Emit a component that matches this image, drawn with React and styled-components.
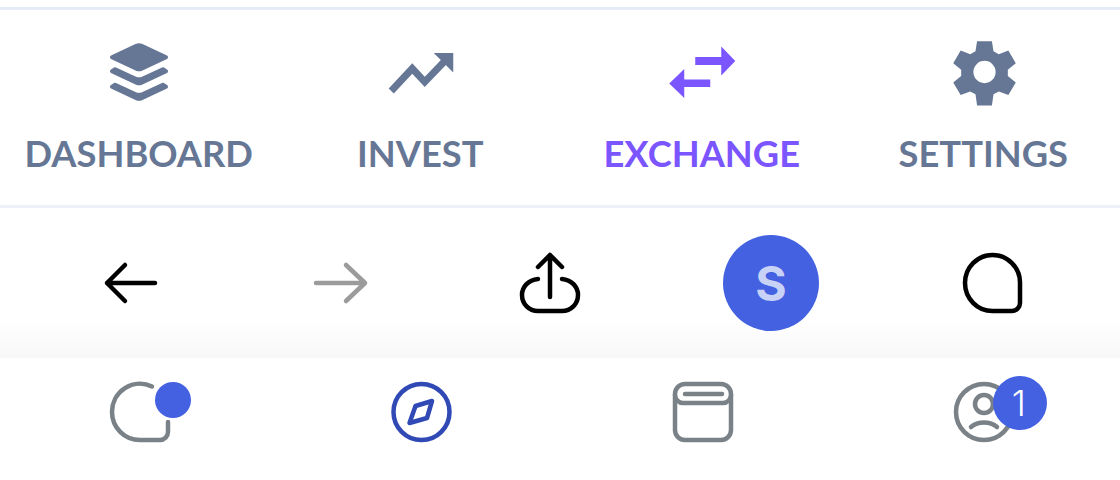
import styled, { createGlobalStyle } from 'styled-components';

const Global = createGlobalStyle`
  html, body { margin: 0; padding: 0; background: #fff; }
  * { box-sizing: border-box; }
`;

const Page = styled.div`
  width: 1120px;
  height: 480px;
  overflow: hidden;
  background: #fff;
  padding-top: 7px;
  display: flex;
  flex-direction: column;
`;

const TopNav = styled.nav`
  height: 201px;
  border-top: 3px solid #e5ebf9;
  border-bottom: 3px solid #edf1f7;
  display: grid;
  grid-template-columns: repeat(4, 281.5px);
  justify-content: center;
  padding-left: 2px;
`;

const NavItem = styled.div`
  display: flex;
  flex-direction: column;
  align-items: center;
  color: ${({ $active }) => ($active ? '#7b55ff' : '#667795')};
`;

const NavIcon = styled.svg`
  width: 80px;
  height: 80px;
  margin-top: 21px;
  fill: currentColor;
  display: block;
`;

const NavLabel = styled.div`
  font-family: Lato, sans-serif;
  font-size: 36.3px;
  font-weight: 700;
  line-height: 44px;
  margin-top: 20px;
`;

const Toolbar = styled.div`
  height: 150px;
  padding-top: 27px;
  display: grid;
  grid-template-columns: 131px 209px 210px 221px 221px;
  background: linear-gradient(to bottom, #fff 0, #fff 112px, #f7f7f7 150px);
`;

const ToolCell = styled.div`
  display: flex;
  justify-content: flex-end;
  width: 100%;
`;

const ToolSlot = styled.div`
  width: 96px;
  height: 96px;
  margin-right: -48px;
  display: flex;
  align-items: center;
  justify-content: center;
`;

const ToolIcon = styled.svg`
  width: 72px;
  height: 72px;
  fill: none;
  stroke: ${({ $muted }) => ($muted ? '#9b9b9b' : '#000')};
  stroke-width: 4.5;
  stroke-linecap: round;
  stroke-linejoin: round;
`;

const Avatar = styled.div`
  width: 96px;
  height: 96px;
  border-radius: 50%;
  background: #4361e1;
  color: #c8d1f6;
  font-family: Inter, sans-serif;
  font-size: 48px;
  font-weight: 700;
  display: flex;
  align-items: center;
  justify-content: center;
`;

const TabBar = styled.div`
  height: 122px;
  display: grid;
  grid-template-columns: repeat(4, 281.5px);
  justify-content: center;
  padding-left: 4px;
  background: #fff;
`;

const Tab = styled.div`
  display: flex;
  justify-content: center;
  padding-top: 18px;
`;

const TabIconWrap = styled.div`
  position: relative;
  width: 72px;
  height: 72px;
`;

const TabIcon = styled.svg`
  width: 72px;
  height: 72px;
  display: block;
  fill: none;
  stroke: ${({ $color }) => $color || '#7a8288'};
  stroke-width: 4.5;
  stroke-linecap: round;
  stroke-linejoin: round;
`;

const Dot = styled.span`
  position: absolute;
  left: 51px;
  top: 6px;
  width: 36px;
  height: 36px;
  border-radius: 50%;
  background: #4361e1;
`;

const Badge = styled.span`
  position: absolute;
  left: 45px;
  top: 0;
  width: 54px;
  height: 54px;
  padding-right: 3px;
  border-radius: 50%;
  background: #4361e1;
  color: #fff;
  font-family: Inter, sans-serif;
  font-size: 36px;
  font-weight: 300;
  display: flex;
  align-items: center;
  justify-content: center;
`;

const wing = 'M17 36.500L36.500 45.500a8 8 0 0 0 7 0L63 36.500a2 2 0 0 1 2 0l3 2a2 2 0 0 1 0 3.500L43.500 53.500a8 8 0 0 1-7 0L12 42a2 2 0 0 1 0-3.500l3-2a2 2 0 0 1 2 0z';

const navItems = [
  {
    label: 'DASHBOARD',
    icon: (
      <>
        <path d="M36.500 13a8 8 0 0 1 7 0L68 24.500a2 2 0 0 1 0 3.500L43.500 39.500a8 8 0 0 1-7 0L12 28a2 2 0 0 1 0-3.500z" />
        <path d={wing} />
        <path d={wing} transform="translate(0 15.500)" />
      </>
    ),
  },
  {
    label: 'INVEST',
    icon: (
      <g transform="translate(0.75 0)">
        <path d="M10.500 60L31.500 37.500 44 51 66 28" fill="none" stroke="currentColor" strokeWidth="7" />
        <path d="M53 22h19.500v19.500z" />
      </g>
    ),
  },
  {
    label: 'EXCHANGE',
    active: true,
    icon: (
      <g transform="translate(1.25 0)">
        <path d="M32 26h26V15.500L72 30 58 44.500V34H32z" />
        <path d="M47 48.500H21V38L6 52.500 21 67V56h26z" />
      </g>
    ),
  },
  {
    label: 'SETTINGS',
    icon: (
      <path
        transform="translate(41.5 41) scale(1.06) translate(-40 -40)"
        fillRule="evenodd"
        d="M33 11h14l1.500 9.500 5 2.800 9-3.500 7 12-7.500 6v6l7.500 6-7 12-9-3.500-5 2.800-1.500 10.400h-14l-1.500-10.400-5-2.800-9 3.500-7-12 7.500-6v-6l-7.500-6 7-12 9 3.500 5-2.800zM40 29.500a10.500 10.500 0 1 0 0 21 10.500 10.500 0 0 0 0-21z"
      />
    ),
  },
];

export default function App() {
  return (
    <Page>
      <Global />
      <TopNav>
        {navItems.map((item) => (
          <NavItem key={item.label} $active={item.active}>
            <NavIcon viewBox="0 0 80 80">{item.icon}</NavIcon>
            <NavLabel>{item.label}</NavLabel>
          </NavItem>
        ))}
      </TopNav>

      <Toolbar>
        <ToolCell>
          <ToolSlot>
            <ToolIcon viewBox="0 0 72 72">
              <path d="M60 36H12M30 18L12 36 30 54" />
            </ToolIcon>
          </ToolSlot>
        </ToolCell>
        <ToolCell>
          <ToolSlot>
            <ToolIcon viewBox="0 0 72 72" $muted>
              <path d="M12 36h49M42 18l19 18-19 18" />
            </ToolIcon>
          </ToolSlot>
        </ToolCell>
        <ToolCell>
          <ToolSlot>
            <ToolIcon viewBox="0 0 72 72">
              <path d="M36 50V8M24 20L36 8 48 20" />
              <path d="M24 32C14 33 8 40 8 48c0 9 7 16 16 16h24c9 0 16-7 16-16 0-8-6-15-16-16" />
            </ToolIcon>
          </ToolSlot>
        </ToolCell>
        <ToolCell>
          <ToolSlot>
            <Avatar>S</Avatar>
          </ToolSlot>
        </ToolCell>
        <ToolCell>
          <ToolSlot>
            <ToolIcon viewBox="0 0 72 72">
              <path d="M36.500 8A27.500 27.500 0 0 1 64 35.500V56a8 8 0 0 1-8 8H36.500A27.500 28 0 0 1 9 36 27.500 28 0 0 1 36.500 8z" />
            </ToolIcon>
          </ToolSlot>
        </ToolCell>
      </Toolbar>

      <TabBar>
        <Tab>
          <TabIconWrap>
            <TabIcon viewBox="0 0 72 72">
              <path d="M48 10.500A28 28 0 0 0 8 36a28 28 0 0 0 28 28h20a8 8 0 0 0 8-8V46" />
            </TabIcon>
            <Dot />
          </TabIconWrap>
        </Tab>
        <Tab>
          <TabIconWrap>
            <TabIcon viewBox="0 0 72 72" $color="#3049b5">
              <circle cx="36.500" cy="36" r="28" />
              <path d="M47 25L42 42 24.500 47 30.500 30z" />
            </TabIcon>
          </TabIconWrap>
        </Tab>
        <Tab>
          <TabIconWrap>
            <TabIcon viewBox="0 0 72 72">
              <rect x="8" y="8" width="56" height="56" rx="10" />
              <path d="M8 19a8 8 0 0 0 8 8h40a8 8 0 0 0 8-8" />
              <path d="M18 18h37" />
            </TabIcon>
          </TabIconWrap>
        </Tab>
        <Tab>
          <TabIconWrap>
            <TabIcon viewBox="0 0 72 72">
              <circle cx="36" cy="36" r="28" />
              <circle cx="36" cy="28" r="9" />
              <path d="M23 51c7-6 19-6 26 0" />
            </TabIcon>
            <Badge>1</Badge>
          </TabIconWrap>
        </Tab>
      </TabBar>
    </Page>
  );
}
